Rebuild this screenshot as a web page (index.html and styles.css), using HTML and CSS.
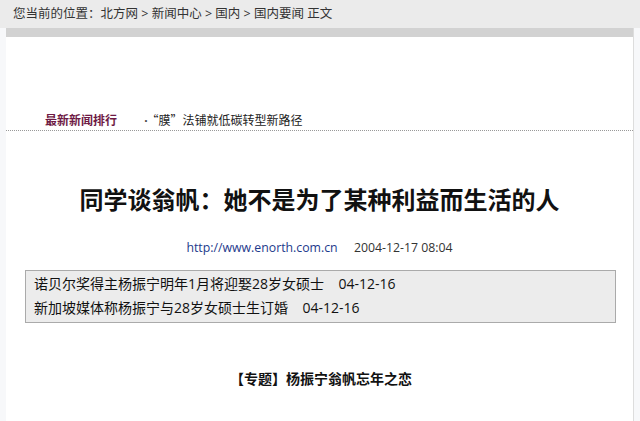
FILE: index.html
```html
<!DOCTYPE html>
<html lang="zh-CN">
<head>
    <meta charset="UTF-8">
    <title>同学谈翁帆：她不是为了某种利益而生活的人</title>
    <link rel="stylesheet" href="styles.css">
</head>
<body>
    <div class="crumb">您当前的位置：北方网 &gt; 新闻中心 &gt; 国内 &gt; 国内要闻 正文</div>
    <div class="page">
        <div class="band"></div>
        <div class="rank">
            <span class="rank-title">最新新闻排行</span>
            <span class="dot">·</span><span class="rank-item">“膜”法铺就低碳转型新路径</span>
        </div>
        <h1>同学谈翁帆：她不是为了某种利益而生活的人</h1>
        <div class="meta">
            <span class="src">http://www.enorth.com.cn</span>
            <span class="date">2004-12-17 08:04</span>
        </div>
        <div class="related">
            <p>诺贝尔奖得主杨振宁明年1月将迎娶28岁女硕士&nbsp;&nbsp;&nbsp;&nbsp;04-12-16</p>
            <p>新加坡媒体称杨振宁与28岁女硕士生订婚&nbsp;&nbsp;&nbsp;&nbsp;04-12-16</p>
        </div>
        <div class="topic">【专题】杨振宁翁帆忘年之恋</div>
    </div>
</body>
</html>
```

FILE: styles.css
```css
body {
    margin: 0;
    background: #f7f8fa;
    font-family: "Open Sans", "Noto Sans CJK SC", sans-serif;
    color: #222;
}
.crumb {
    height: 28px;
    line-height: 28px;
    padding-left: 13px;
    background: #ebebeb;
    font-size: 12.5px;
    color: #333;
}
.page {
    margin: 0 6px;
    width: 627px;
    height: 393px;
    background: #fff;
    border-right: 1px solid #ddd;
}
.band {
    height: 9px;
    background: #d2d2d2;
}
.rank {
    margin-top: 74px;
    height: 19px;
    line-height: 18px;
    font-size: 12px;
    border-bottom: 1px dotted #999;
}
.rank-title {
    margin-left: 39px;
    font-weight: bold;
    color: #6e1a45;
}
.dot {
    margin-left: 24px;
    font-weight: bold;
    color: #444;
}
.rank-item {
    margin-left: 5px;
    font-family: "Noto Sans CJK SC", sans-serif;
    color: #222;
}
h1 {
    margin: 50px 0 0;
    text-align: center;
    font-size: 24px;
    line-height: 38px;
    font-weight: bold;
    color: #111;
}
.meta {
    margin-top: 21px;
    text-align: center;
    font-size: 12.3px;
    line-height: 16px;
}
.src {
    color: #1d3a8c;
}
.date {
    margin-left: 13px;
    color: #333;
}
.related {
    margin: 14px 0 0 19px;
    width: 591px;
    height: 53px;
    padding: 1px 0 0;
    background: #ececec;
    border: 1px solid #aaa;
    box-sizing: border-box;
}
.related p {
    margin: 0;
    padding-left: 8px;
    font-size: 14px;
    line-height: 24px;
    color: #111;
}
.topic {
    margin-top: 45px;
    text-align: center;
    font-size: 14px;
    font-weight: bold;
    color: #111;
    padding-left: 3px;
}
```
